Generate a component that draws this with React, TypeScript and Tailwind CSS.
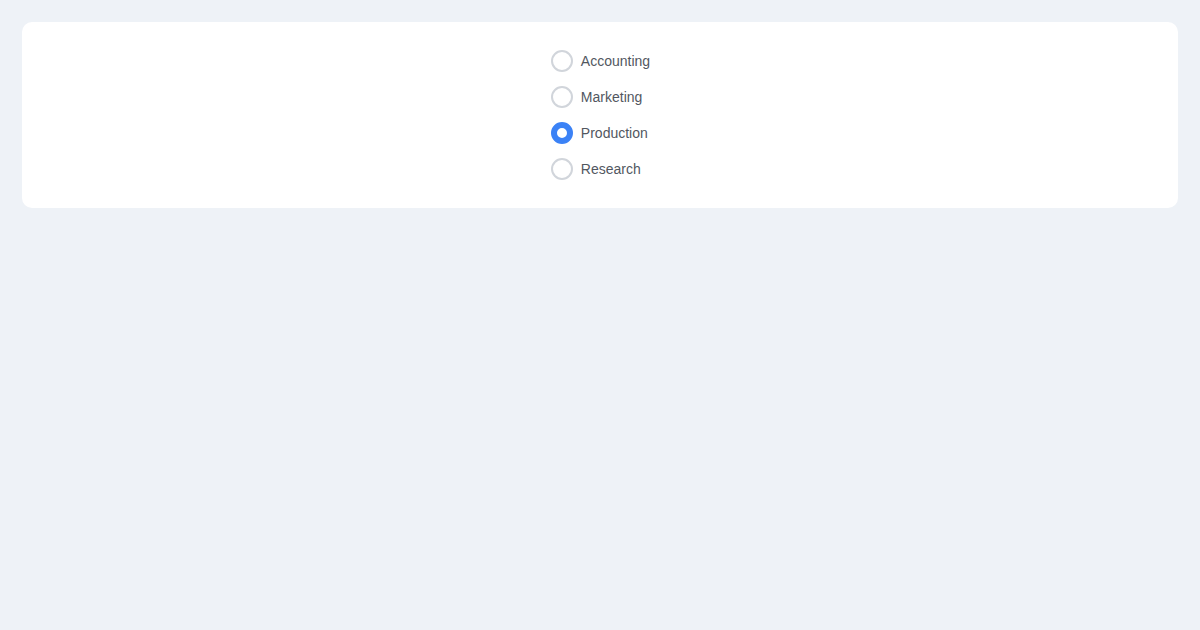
import { useState } from "react";

const options = ["Accounting", "Marketing", "Production", "Research"];

export default function App() {
  const [value, setValue] = useState("Production");

  return (
    <div className="min-h-screen bg-[#eef2f7] p-[22px] font-['Liberation_Sans',Arial,sans-serif]">
      <div className="flex justify-center rounded-[10px] bg-white py-[21px]">
        <div className="flex flex-col pl-px">
          {options.map((opt) => {
            const checked = value === opt;
            return (
              <label
                key={opt}
                className="flex h-9 cursor-pointer items-center gap-2"
                onClick={() => setValue(opt)}
              >
                <span
                  className={
                    checked
                      ? "box-border h-[22px] w-[22px] rounded-full border-[6px] border-[#3b82f6] bg-white"
                      : "box-border h-[22px] w-[22px] rounded-full border-2 border-[#d1d5db] bg-white"
                  }
                />
                <span className="text-[14px] text-[#52575f]">{opt}</span>
              </label>
            );
          })}
        </div>
      </div>
    </div>
  );
}
